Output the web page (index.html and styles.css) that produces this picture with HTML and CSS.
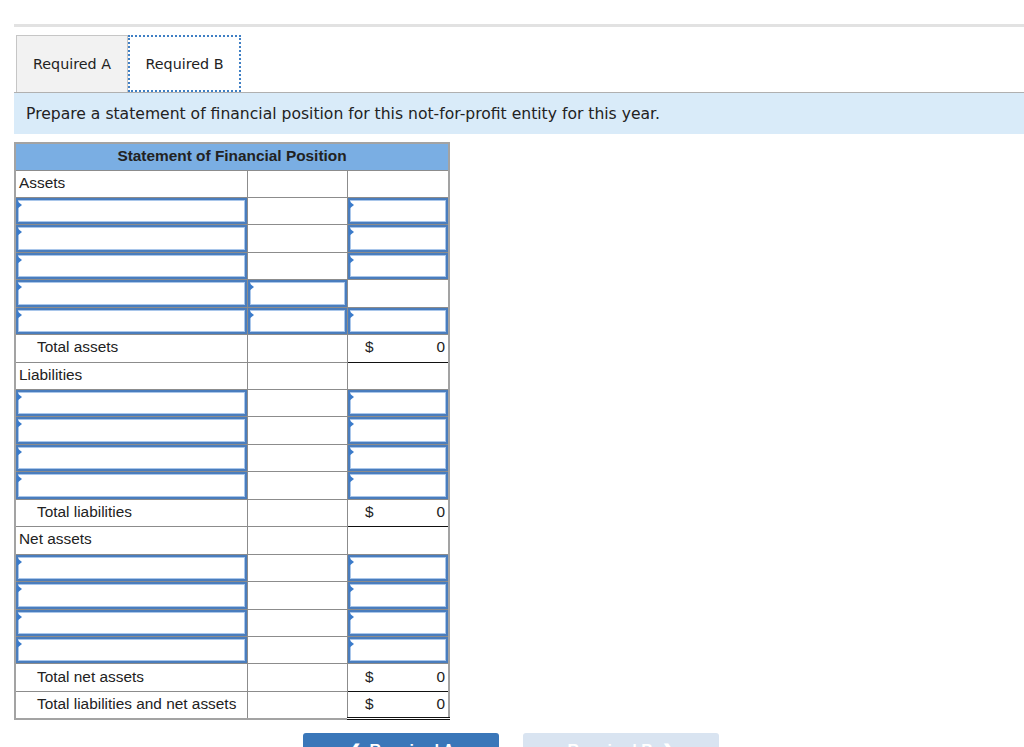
FILE: index.html
```html
<!DOCTYPE html>
<html lang="en">

<head>
    <meta charset="UTF-8">
    <meta name="viewport" content="width=device-width, initial-scale=1.0">
    <title>Statement of Financial Position</title>
    <link rel="stylesheet" href="styles.css">
</head>

<body>
    <div class="page">
        <div class="topline"></div>
        <div class="tabs">
            <button class="tab">Required A</button>
            <button class="tab active">Required B</button>
        </div>
        <div class="instructions">Prepare a statement of financial position for this not-for-profit entity for this year.</div>

        <table class="sfp">
            <colgroup>
                <col class="c1">
                <col class="c2">
                <col class="c3">
            </colgroup>
            <tr>
                <th colspan="3">Statement of Financial Position</th>
            </tr>
            <tr>
                <td class="label">Assets</td>
                <td></td>
                <td></td>
            </tr>
            <tr>
                <td class="inp"><div class="box"></div></td>
                <td></td>
                <td class="inp"><div class="box"></div></td>
            </tr>
            <tr>
                <td class="inp"><div class="box"></div></td>
                <td></td>
                <td class="inp"><div class="box"></div></td>
            </tr>
            <tr>
                <td class="inp"><div class="box"></div></td>
                <td></td>
                <td class="inp"><div class="box"></div></td>
            </tr>
            <tr>
                <td class="inp"><div class="box"></div></td>
                <td class="inp"><div class="box"></div></td>
                <td></td>
            </tr>
            <tr>
                <td class="inp"><div class="box"></div></td>
                <td class="inp"><div class="box"></div></td>
                <td class="inp"><div class="box"></div></td>
            </tr>
            <tr>
                <td class="total">Total assets</td>
                <td></td>
                <td class="amt single"><span>$</span><span>0</span></td>
            </tr>
            <tr>
                <td class="label">Liabilities</td>
                <td></td>
                <td></td>
            </tr>
            <tr>
                <td class="inp"><div class="box"></div></td>
                <td></td>
                <td class="inp"><div class="box"></div></td>
            </tr>
            <tr>
                <td class="inp"><div class="box"></div></td>
                <td></td>
                <td class="inp"><div class="box"></div></td>
            </tr>
            <tr>
                <td class="inp"><div class="box"></div></td>
                <td></td>
                <td class="inp"><div class="box"></div></td>
            </tr>
            <tr>
                <td class="inp"><div class="box"></div></td>
                <td></td>
                <td class="inp"><div class="box"></div></td>
            </tr>
            <tr>
                <td class="total">Total liabilities</td>
                <td></td>
                <td class="amt single"><span>$</span><span>0</span></td>
            </tr>
            <tr>
                <td class="label">Net assets</td>
                <td></td>
                <td></td>
            </tr>
            <tr>
                <td class="inp"><div class="box"></div></td>
                <td></td>
                <td class="inp"><div class="box"></div></td>
            </tr>
            <tr>
                <td class="inp"><div class="box"></div></td>
                <td></td>
                <td class="inp"><div class="box"></div></td>
            </tr>
            <tr>
                <td class="inp"><div class="box"></div></td>
                <td></td>
                <td class="inp"><div class="box"></div></td>
            </tr>
            <tr>
                <td class="inp"><div class="box"></div></td>
                <td></td>
                <td class="inp"><div class="box"></div></td>
            </tr>
            <tr>
                <td class="total">Total net assets</td>
                <td></td>
                <td class="amt single"><span>$</span><span>0</span></td>
            </tr>
            <tr>
                <td class="total">Total liabilities and net assets</td>
                <td></td>
                <td class="amt double"><span>$</span><span>0</span></td>
            </tr>
        </table>

        <div class="nav">
            <button class="nav-btn prev">&#10094;&nbsp;&nbsp;Required A</button>
            <button class="nav-btn next">Required B&nbsp;&nbsp;&#10095;</button>
        </div>
    </div>
</body>

</html>
```

FILE: styles.css
```css
* {
    padding: 0;
    margin: 0;
    box-sizing: border-box;
}

body {
    background-color: #fff;
    font-family: "DejaVu Sans", Verdana, sans-serif;
    color: #222;
}

.page {
    padding: 24px 0 0 14px;
}

.topline {
    height: 3px;
    background-color: #e2e2e2;
}

.tabs {
    display: flex;
    margin-top: 8px;
    padding-left: 2px;
}

.tab {
    width: 112px;
    height: 57px;
    font-family: "DejaVu Sans", Verdana, sans-serif;
    font-size: 14.3px;
    color: #222;
    background-color: #f2f2f2;
    border: 1px solid #c6c6c6;
    border-bottom: none;
}

.tab.active {
    width: 113px;
    background-color: #fff;
    border: 2px dotted #3f7fc4;
}

.instructions {
    height: 42px;
    padding-left: 12px;
    line-height: 42px;
    font-size: 15.6px;
    background-color: #d9ebf9;
    border-top: 1px solid #b0b0b0;
}

.sfp {
    margin-top: 8px;
    width: 436px;
    border-collapse: collapse;
    border: 2px solid #a3a3a3;
    font-family: "Liberation Sans", Arial, sans-serif;
    font-size: 15.4px;
    color: #222;
}

.sfp .c1 {
    width: 233px;
}

.sfp .c2 {
    width: 101px;
}

.sfp .c3 {
    width: 102px;
}

.sfp th {
    height: 27px;
    padding-bottom: 2px;
    background-color: #7aaee3;
    font-weight: bold;
    border: 1px solid #8c8c8c;
}

.sfp td {
    height: 27.45px;
    padding: 0 4px 2px;
    border: 1px solid #8c8c8c;
}

.sfp td.label {
    padding-left: 3px;
}

.sfp td.total {
    padding-left: 21px;
}

.sfp td.inp {
    position: relative;
    padding: 0;
}

.box {
    height: 26.45px;
    border: 2px solid #4a7dbd;
    box-shadow: inset 0 0 0 1px #a9c6ea;
    background-color: #fff;
}

.box::before {
    content: "";
    position: absolute;
    left: 1px;
    top: 3px;
    border-left: 5px solid #3b7bca;
    border-top: 4px solid transparent;
    border-bottom: 4px solid transparent;
}

.sfp td.amt {
    padding: 0 3px 2px 17px;
}

.sfp td.amt span:first-child {
    float: left;
}

.sfp td.amt span:last-child {
    float: right;
}

.sfp td.single {
    border-bottom: 1px solid #111;
}

.sfp td.double {
    border-bottom: 3px double #111;
}

.nav {
    display: flex;
    gap: 24px;
    margin-top: 13px;
    padding-left: 289px;
}

.nav-btn {
    width: 196px;
    height: 40px;
    padding-top: 8px;
    border: none;
    border-radius: 3px;
    font-family: "Liberation Sans", Arial, sans-serif;
    font-size: 16px;
    font-weight: bold;
    display: flex;
    align-items: flex-start;
    justify-content: center;
}

.nav-btn.prev {
    background-color: #3a77b9;
    color: #fff;
}

.nav-btn.next {
    background-color: #d9e4f1;
    color: #fff;
}
```
